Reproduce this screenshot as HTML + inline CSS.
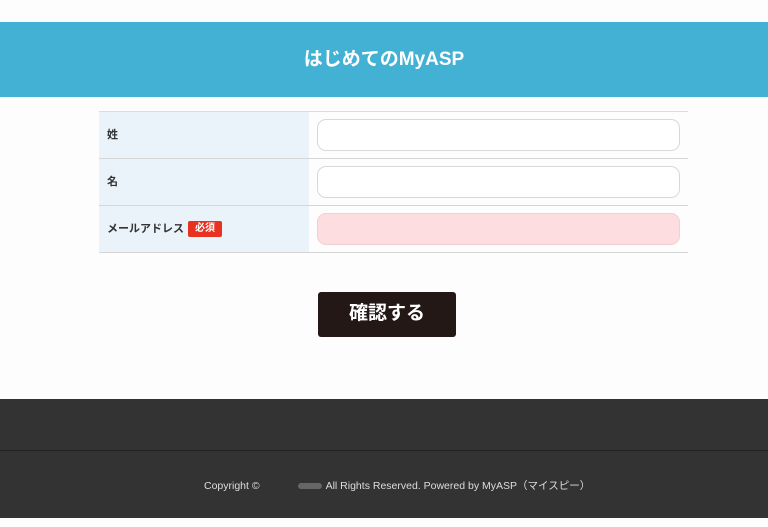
<!DOCTYPE html>
<html><head><meta charset="utf-8"><style>
body{margin:0;width:768px;height:527px;background:#fdfdfd;font-family:"Liberation Sans","Noto Sans CJK JP",sans-serif;position:relative;overflow:hidden}
.hd{position:absolute;top:22px;left:0;width:768px;height:75px;background:#43b1d3;color:#fff;font-weight:bold;font-size:19px;text-align:center;line-height:75px}
.tb{position:absolute;left:99px;top:111px;width:589px;border-top:1px solid #ddd}
.row{height:46px;border-bottom:1px solid #d6d6d6;position:relative}
.lb{position:absolute;left:0;top:0;width:210px;height:100%;background:#ebf3fa;font-size:11px;font-weight:bold;color:#333;line-height:46px;padding-left:8px;box-sizing:border-box}
.in{position:absolute;left:218px;top:7px;width:363px;height:32px;border:1px solid #d8d8d8;border-radius:9px;background:#fff;box-sizing:border-box}
.req{display:inline-block;background:#e8321f;color:#fff;font-size:10px;line-height:16px;padding:0 7px;border-radius:2px;margin-left:4px;vertical-align:middle}
.btn{position:absolute;left:318px;top:292px;width:138px;height:45px;background:#231815;border-radius:3px;color:#fff;font-weight:bold;font-size:19px;text-align:center;line-height:43px}
.ft{position:absolute;left:0;top:399px;width:768px;height:119px;background:#333333}
.ft .ln{position:absolute;top:51px;left:0;width:100%;height:1px;background:#222}
.ft .cp{position:absolute;top:79px;left:204px;color:#ddd;font-size:10.5px}
</style></head><body>
<div class="hd">はじめてのMyASP</div>
<div class="tb">
<div class="row"><div class="lb">姓</div><div class="in"></div></div>
<div class="row"><div class="lb">名</div><div class="in"></div></div>
<div class="row"><div class="lb">メールアドレス<span class="req">必須</span></div><div class="in" style="background:#fddde0;border-color:#f0d0d3"></div></div>
</div>
<div class="btn">確認する</div>
<div class="ft"><div class="ln"></div><div class="cp">Copyright ©<span style="display:inline-block;width:24px;height:6px;background:#666;border-radius:3px;margin:0 4px 0 38px;vertical-align:middle"></span>All Rights Reserved. Powered by MyASP（マイスピー）</div></div>
</body></html>
